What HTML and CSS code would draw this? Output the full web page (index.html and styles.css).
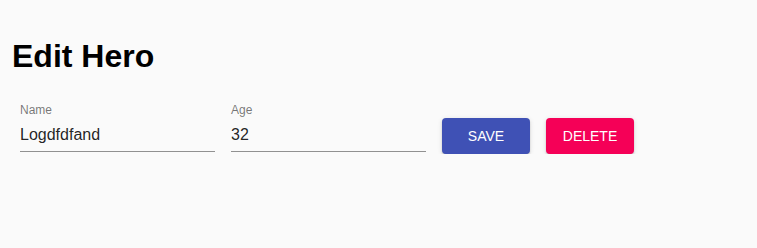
FILE: index.html
```html
<!DOCTYPE html>
<html>
<head>
<meta charset="utf-8">
<link rel="stylesheet" href="styles.css">
</head>
<body>
<div class="page">
  <h1 class="title">Edit Hero</h1>
  <form class="form">
    <div class="field">
      <label class="field-label">Name</label>
      <div class="field-value">Logdfdfand</div>
    </div>
    <div class="field">
      <label class="field-label">Age</label>
      <div class="field-value">32</div>
    </div>
    <button type="button" class="btn btn-primary">Save</button>
    <button type="button" class="btn btn-accent">Delete</button>
  </form>
</div>
</body>
</html>
```
FILE: styles.css
```css
html, body {
  margin: 0;
  padding: 0;
  background: #fafafa;
  font-family: "Liberation Sans", Arial, sans-serif;
}
.page {
  padding: 12px 12px 0 12px;
}
.title {
  margin: 24px 0 0 0;
  font-size: 32px;
  line-height: 40px;
  font-weight: bold;
  color: #000;
}
.form {
  display: flex;
  align-items: flex-start;
  gap: 16px;
  padding: 28px 0 0 8px;
}
.field {
  width: 195px;
  display: flex;
  flex-direction: column;
}
.field-label {
  font-size: 12px;
  line-height: 12px;
  color: rgba(0,0,0,0.54);
}
.field-value {
  font-size: 16px;
  line-height: 20px;
  padding: 9px 0 6px 0;
  color: rgba(0,0,0,0.87);
  border-bottom: 1px solid rgba(0,0,0,0.42);
}
.btn {
  margin-top: 14px;
  width: 88px;
  height: 36px;
  border: none;
  border-radius: 4px;
  color: #fff;
  font-family: "Liberation Sans", Arial, sans-serif;
  font-size: 14px;
  text-transform: uppercase;
  box-shadow: 0 3px 1px -2px rgba(0,0,0,.2), 0 2px 2px 0 rgba(0,0,0,.14), 0 1px 5px 0 rgba(0,0,0,.12);
}
.btn-primary { background: #3f51b5; }
.btn-accent { background: #f50057; }
```
